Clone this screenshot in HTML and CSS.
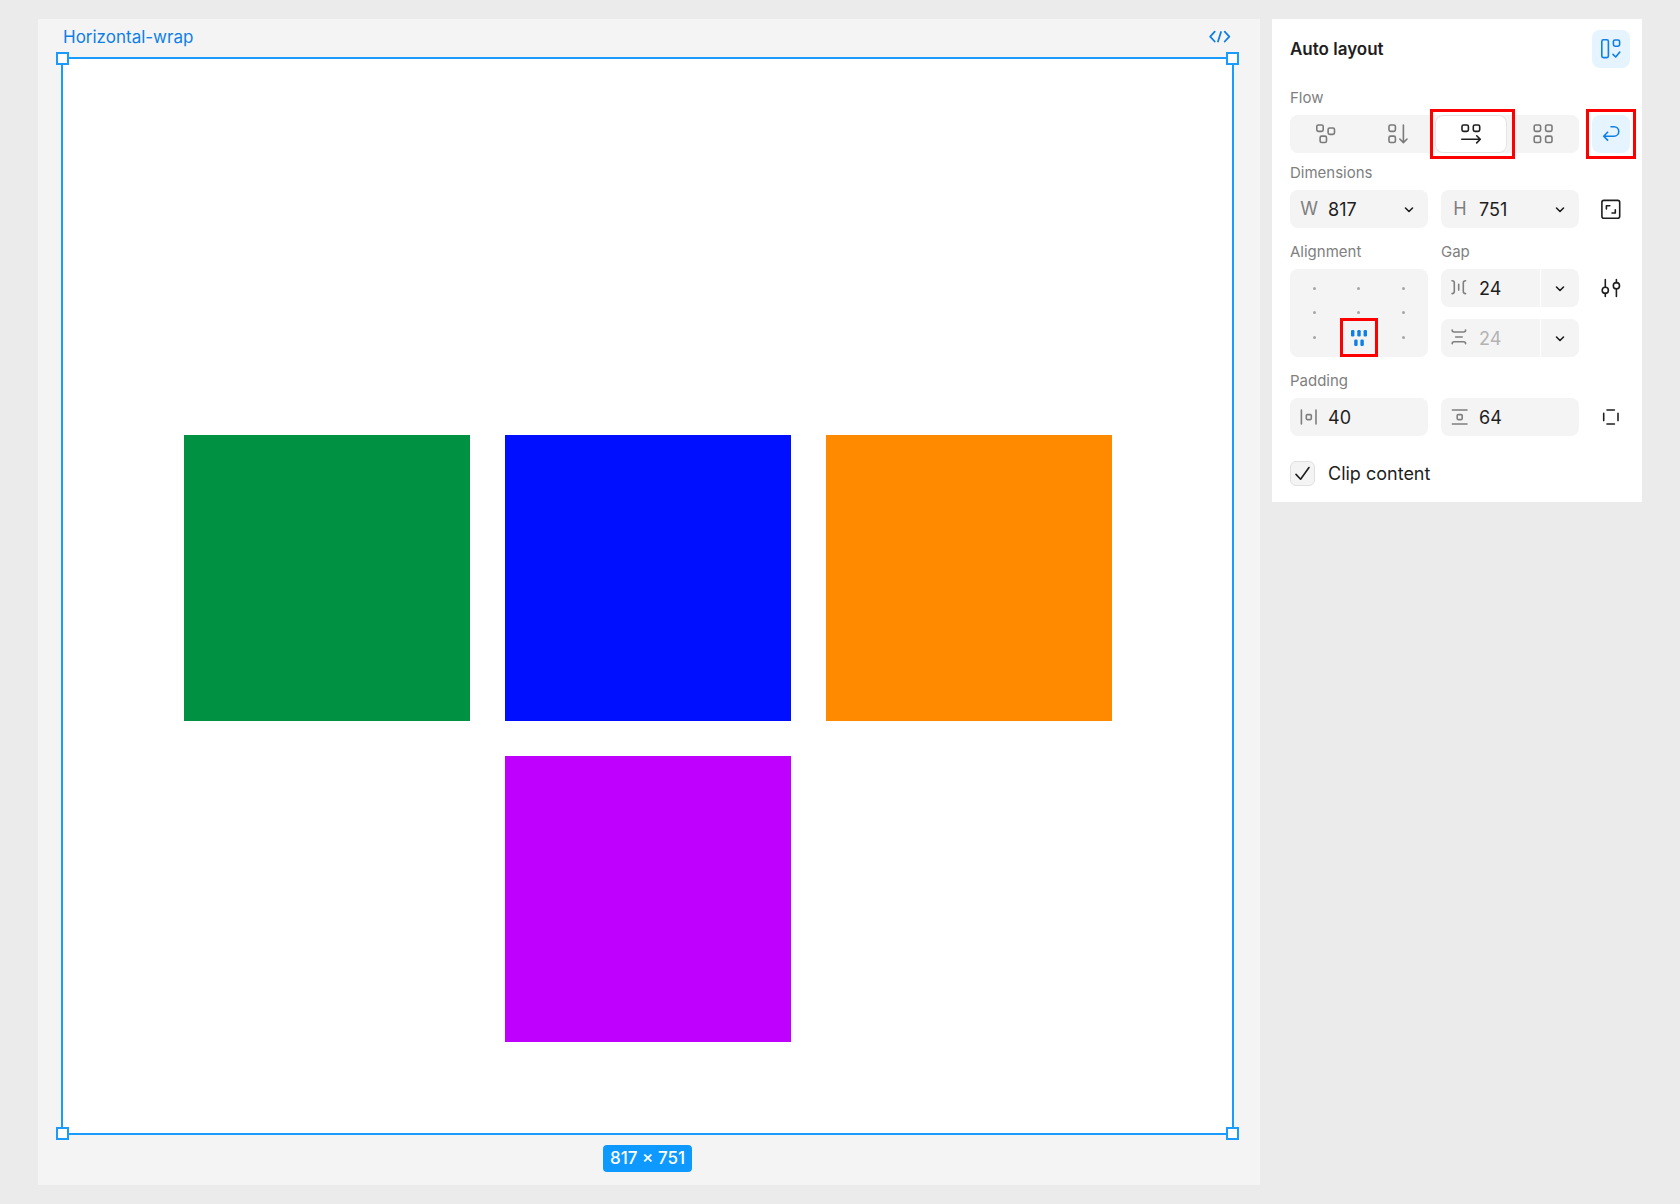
FILE: index.html
```
<!DOCTYPE html>
<html lang="en">
<head>
    <meta charset="UTF-8">
    <meta name="viewport" content="width=device-width, initial-scale=1.0">
    <title>Auto layout - Horizontal wrap</title>
    <link rel="stylesheet" href="styles.css">
</head>
<body>

    <main class="canvas">
        <header class="frame-header">
            <span class="frame-name">Horizontal-wrap</span>
            <svg class="code-icon" width="22" height="14" viewBox="0 0 22 14"><path d="M5.7 1.7 1.2 6.6l4.5 4.9M12 2 9 11.5M15.7 1.7l4.6 4.9-4.6 4.9"/></svg>
        </header>

        <div class="frame">
            <div class="box green"></div>
            <div class="box blue"></div>
            <div class="box orange"></div>
            <div class="box purple"></div>

            <span class="handle top left"></span>
            <span class="handle top right"></span>
            <span class="handle bottom left"></span>
            <span class="handle bottom right"></span>
        </div>

        <footer class="frame-footer">
            <span class="size-badge">817 × 751</span>
        </footer>
    </main>

    <aside class="panel">
        <header class="panel-header">
            <h1>Auto layout</h1>
            <button class="icon-button active" aria-label="Remove auto layout">
                <svg class="icon" viewBox="0 0 38 38"><rect x="9.8" y="9.8" width="6.6" height="17.8" rx="1.6"/><rect x="21.4" y="10" width="6.2" height="6.2" rx="1.6"/><path d="m21 24.4 2.7 2.6 4.1-5"/></svg>
            </button>
        </header>

        <!-- Flow -->
        <section class="row flow-row">
            <h2 class="label">Flow</h2>
            <div class="segments">
                <button class="segment" aria-label="Freeform">
                    <svg class="icon" viewBox="0 0 38 38"><rect x="9.8" y="10" width="6.4" height="6.4" rx="1.6"/><rect x="21.1" y="13" width="6.4" height="6.4" rx="1.6"/><rect x="13.1" y="21.1" width="6.4" height="6.4" rx="1.6"/></svg>
                </button>
                <button class="segment" aria-label="Vertical">
                    <svg class="icon" viewBox="0 0 38 38"><rect x="10" y="10" width="6.4" height="6.4" rx="1.6"/><rect x="10" y="21.1" width="6.4" height="6.4" rx="1.6"/><path d="M24.4 10v17.5M20.8 24l3.6 3.6L28 24"/></svg>
                </button>
                <button class="segment selected marked" aria-label="Horizontal" aria-pressed="true">
                    <svg class="icon" viewBox="0 0 38 38"><rect x="10" y="10" width="6.4" height="6.4" rx="1.6"/><rect x="21.3" y="10" width="6.4" height="6.4" rx="1.6"/><path d="M9.8 24.3h18.4M24.7 20.8l3.6 3.5-3.6 3.6"/></svg>
                </button>
                <button class="segment" aria-label="Grid">
                    <svg class="icon" viewBox="0 0 38 38"><rect x="10.2" y="10" width="6.4" height="6.4" rx="1.6"/><rect x="21.6" y="10" width="6.4" height="6.4" rx="1.6"/><rect x="10.2" y="21.1" width="6.4" height="6.4" rx="1.6"/><rect x="21.6" y="21.1" width="6.4" height="6.4" rx="1.6"/></svg>
                </button>
            </div>
            <button class="icon-button active marked" aria-label="Wrap" aria-pressed="true">
                <svg class="icon" viewBox="0 0 38 38"><path d="M19 11.7h3a4.7 4.7 0 0 1 0 9.5H11.8M15.6 17.2l-3.9 4 3.9 3.9"/></svg>
            </button>
        </section>

        <!-- Dimensions -->
        <section class="row">
            <h2 class="label">Dimensions</h2>
            <div class="field">
                <label for="width">W</label>
                <input id="width" type="text" value="817">
                <button class="chevron" aria-label="Width options"><svg class="icon" viewBox="0 0 38 38"><path d="m15.5 18 3.5 3.5 3.5-3.5"/></svg></button>
            </div>
            <div class="field">
                <label for="height">H</label>
                <input id="height" type="text" value="751">
                <button class="chevron" aria-label="Height options"><svg class="icon" viewBox="0 0 38 38"><path d="m15.5 18 3.5 3.5 3.5-3.5"/></svg></button>
            </div>
            <button class="icon-button" aria-label="Lock aspect ratio">
                <svg class="icon" viewBox="0 0 38 38"><rect x="9.9" y="10.4" width="17.8" height="17.8" rx="2"/><path d="M14.4 19v-3.3h3.4M20 23h3.3v-3.3"/></svg>
            </button>
        </section>

        <!-- Alignment and gap -->
        <section class="row">
            <h2 class="label half">Alignment</h2>
            <h2 class="label rest">Gap</h2>
            <div class="alignment">
                <button class="point" aria-label="Top left"></button>
                <button class="point" aria-label="Top center"></button>
                <button class="point" aria-label="Top right"></button>
                <button class="point" aria-label="Left"></button>
                <button class="point" aria-label="Center"></button>
                <button class="point" aria-label="Right"></button>
                <button class="point" aria-label="Bottom left"></button>
                <button class="point current marked" aria-label="Bottom center" aria-pressed="true">
                    <svg width="16" height="16" viewBox="0 0 16 16"><rect x="0" y="0" width="3.4" height="6.5" rx="1.2"/><rect x="6.3" y="0" width="3.4" height="6.5" rx="1.2"/><rect x="12.6" y="0" width="3.4" height="6.5" rx="1.2"/><rect x="3.2" y="9.5" width="3.4" height="6.5" rx="1.2"/><rect x="9.4" y="9.5" width="3.4" height="6.5" rx="1.2"/></svg>
                </button>
                <button class="point" aria-label="Bottom right"></button>
            </div>
            <div class="gaps">
                <div class="field split">
                    <label for="gap-x" aria-label="Horizontal gap"><svg class="icon" viewBox="0 0 38 38"><path d="M11 11.8q2.3 0 2.3 2v8.8q0 2-2.3 2M17.7 15.3v5.8M24.6 11.8q-2.3 0-2.3 2v8.8q0 2 2.3 2"/></svg></label>
                    <input id="gap-x" type="text" value="24">
                    <button class="chevron" aria-label="Horizontal gap options"><svg class="icon" viewBox="0 0 38 38"><path d="m15.5 18 3.5 3.5 3.5-3.5"/></svg></button>
                </div>
                <div class="field split auto">
                    <label for="gap-y" aria-label="Vertical gap"><svg class="icon" viewBox="0 0 38 38"><path d="M11.2 11q0 2 2 2h9.4q2 0 2-2M14.7 18h6.5M11.2 24.7q0-2 2-2h9.4q2 0 2 2"/></svg></label>
                    <input id="gap-y" type="text" value="24">
                    <button class="chevron" aria-label="Vertical gap options"><svg class="icon" viewBox="0 0 38 38"><path d="m15.5 18 3.5 3.5 3.5-3.5"/></svg></button>
                </div>
            </div>
            <button class="icon-button" aria-label="Auto layout settings">
                <svg class="icon" viewBox="0 0 38 38"><circle cx="13.3" cy="21.3" r="3.1"/><circle cx="24.4" cy="16.7" r="3.1"/><path d="M13.3 10.5v7.7M13.3 24.4v3.1M24.4 10.5v3.1M24.4 19.8v7.7"/></svg>
            </button>
        </section>

        <!-- Padding -->
        <section class="row">
            <h2 class="label">Padding</h2>
            <div class="field">
                <label for="padding-x" aria-label="Horizontal padding"><svg class="icon" viewBox="0 0 38 38"><path d="M11.4 12v14M26 12v14"/><rect x="16.3" y="16.6" width="5" height="5" rx="1"/></svg></label>
                <input id="padding-x" type="text" value="40">
            </div>
            <div class="field">
                <label for="padding-y" aria-label="Vertical padding"><svg class="icon" viewBox="0 0 38 38"><path d="M11.4 12H26M11.4 26H26"/><rect x="16.2" y="16.6" width="5" height="5" rx="1"/></svg></label>
                <input id="padding-y" type="text" value="64">
            </div>
            <button class="icon-button" aria-label="Individual padding">
                <svg class="icon" viewBox="0 0 38 38"><path d="M15 12h7.4M15 26h7.4M11.7 15.4v7.2M26 15.4v7.2"/></svg>
            </button>
        </section>

        <label class="clip">
            <span class="tick">
                <input type="checkbox" checked>
                <svg width="25" height="25" viewBox="0 0 25 25"><path d="m6 13.4 4.6 4.8L19 6.5"/></svg>
            </span>
            Clip content
        </label>
    </aside>

</body>
</html>
```
FILE: styles.css
```
* {
    box-sizing: border-box;
}

body {
    margin: 0;
    padding: 19px 38px;
    min-height: 100vh;
    display: flex;
    gap: 12px;
    background: #ebebeb;
    color: #1e1e1e;
    font-family: Inter, "Liberation Sans", sans-serif;
    font-size: 17px;
}

button,
input {
    margin: 0;
    padding: 0;
    border: none;
    background: none;
    color: inherit;
    font: inherit;
}

svg {
    display: block;
    fill: none;
    stroke: currentColor;
    stroke-width: 1.6;
    stroke-linecap: round;
    stroke-linejoin: round;
}

/* Canvas */
.canvas {
    flex: 1;
    display: flex;
    flex-direction: column;
    padding: 0 26px 0 23px;
    background: #f4f4f4;
}

.frame-header {
    display: flex;
    justify-content: space-between;
    align-items: center;
    height: 38px;
    padding: 0 3px 2px 2px;
    color: #0d7fe6;
}

.code-icon {
    stroke-width: 1.8;
}

.frame {
    position: relative;
    flex: 1;
    display: flex;
    flex-wrap: wrap;
    justify-content: center;
    align-content: flex-end;
    gap: 35px;
    padding: 56px 56px 91px;
    border: 2px solid #1a9bff;
    background: #fff;
}

.box {
    width: 286px;
    height: 286px;
}

.green {
    background: #009142;
}

.blue {
    background: #000fff;
}

.orange {
    background: #ff8a00;
}

.purple {
    background: #bf00ff;
}

.handle {
    position: absolute;
    width: 13px;
    height: 13px;
    border: 2px solid #1a9bff;
    background: #fff;
}

.handle.top {
    top: -7px;
}

.handle.bottom {
    bottom: -7px;
}

.handle.left {
    left: -7px;
}

.handle.right {
    right: -7px;
}

.frame-footer {
    height: 50px;
    padding-top: 10px;
    text-align: center;
}

.size-badge {
    display: inline-block;
    padding: 0 7px;
    border-radius: 4px;
    background: #0d99ff;
    color: #fff;
    font-weight: 500;
    line-height: 27px;
}

/* Panel */
.panel {
    flex: 0 0 370px;
    align-self: flex-start;
    padding: 11px 12px 16px 18px;
    background: #fff;
}

.panel-header {
    display: flex;
    justify-content: space-between;
    align-items: center;
}

h1 {
    margin: 0;
    font-size: 17px;
    font-weight: 600;
}

.row {
    display: grid;
    grid-template-columns: minmax(0, 1fr) minmax(0, 1fr) 38px;
    column-gap: 13px;
    align-items: start;
    margin-top: 14px;
}

.row.flow-row {
    margin: 20px 0 -4px;
}

.label {
    grid-column: 1 / -1;
    margin: 0 0 7px;
    color: #808080;
    font-size: 15px;
    font-weight: 400;
    line-height: 20px;
}

.label.half {
    grid-column: 1;
}

.label.rest {
    grid-column: 2 / -1;
}

.icon {
    width: 38px;
    height: 38px;
}

.icon-button {
    width: 38px;
    height: 38px;
    border-radius: 8px;
}

.icon-button.active {
    background: #e5f4ff;
    color: #0d7fe6;
}

.segments {
    grid-column: 1 / 3;
    display: flex;
    border-radius: 8px;
    background: #f4f4f4;
}

.segment {
    flex: 1;
    display: flex;
    justify-content: center;
    height: 38px;
    border-radius: 8px;
    color: #7a7a7a;
}

.segment.selected {
    background: #fff;
    box-shadow: inset 0 0 0 1px #e4e4e4;
    color: #1e1e1e;
}

/* Red callouts drawn over the controls in use */
.marked {
    position: relative;
}

.marked::after {
    content: "";
    position: absolute;
    inset: -6px;
    border: 3px solid #f00;
}

.segment.marked::after {
    inset: -6px -8px -6px -5px;
}

.field {
    display: flex;
    height: 38px;
    border-radius: 8px;
    background: #f4f4f4;
    font-size: 18px;
}

.field label {
    flex: 0 0 38px;
    color: #7f7f7f;
    line-height: 38px;
    text-align: center;
}

.field input {
    flex: 1;
    width: 100%;
    min-width: 0;
}

.chevron {
    flex: 0 0 38px;
}

.split .chevron {
    flex-basis: 39px;
    border-left: 1px solid #fff;
}

.field.auto input {
    color: #b3b3b3;
}

.gaps {
    display: flex;
    flex-direction: column;
    gap: 12px;
}

.alignment {
    display: grid;
    grid-template-columns: repeat(3, 1fr);
    grid-template-rows: repeat(3, 1fr);
    height: 88px;
    padding: 7px 2px;
    border-radius: 8px;
    background: #f4f4f4;
}

.point {
    display: flex;
    justify-content: center;
    align-items: center;
}

.point::before {
    content: "";
    width: 3px;
    height: 3px;
    border-radius: 50%;
    background: #a6a6a6;
}

.point.current::before {
    display: none;
}

.point svg {
    fill: #0d7fe6;
    stroke: none;
}

.point.marked::after {
    inset: -7px 3px;
}

.clip {
    display: flex;
    align-items: center;
    gap: 13px;
    margin-top: 25px;
    font-size: 18px;
}

.tick {
    display: grid;
}

.tick input {
    grid-area: 1 / 1;
    appearance: none;
    width: 25px;
    height: 25px;
    border: 1px solid #e0e0e0;
    border-radius: 6px;
    background: #f4f4f4;
}

.tick svg {
    grid-area: 1 / 1;
    z-index: 1;
    pointer-events: none;
}
```
